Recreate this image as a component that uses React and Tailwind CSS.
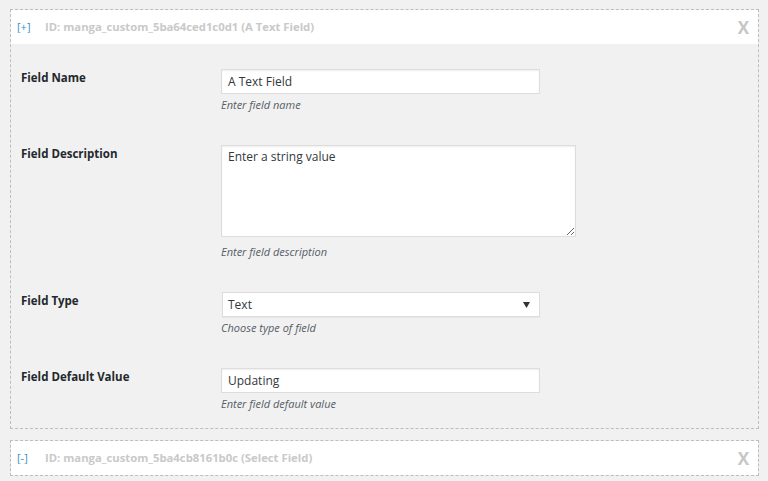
const fields = [
  { label: 'Field Name', value: 'A Text Field', hint: 'Enter field name', kind: 'input' },
  { label: 'Field Description', value: 'Enter a string value', hint: 'Enter field description', kind: 'textarea' },
  { label: 'Field Type', value: 'Text', hint: 'Choose type of field', kind: 'select' },
  { label: 'Field Default Value', value: 'Updating', hint: 'Enter field default value', kind: 'input' },
]

function Header({ toggle, title }) {
  return (
    <div className="flex items-center h-[34px] bg-white pl-[6px] pr-[9px]">
      <span className="text-[#3b8ec2] text-[11px] w-[28px]">{toggle}</span>
      <span className="text-[#c9c9c9] text-[11.3px] font-bold">{title}</span>
      <span className="ml-auto text-[#c6c6c6] text-[17px] font-bold leading-none">X</span>
    </div>
  )
}

function Control({ f }) {
  if (f.kind === 'textarea') {
    return (
      <textarea
        readOnly
        defaultValue={f.value}
        className="block w-[355px] h-[92px] bg-white border border-[#dddddd] shadow-[inset_0_1px_2px_rgba(0,0,0,0.07)] px-[6px] py-[2px] text-[12px] text-[#32373c] leading-[18px] outline-none"
      />
    )
  }
  if (f.kind === 'select') {
    return (
      <div className="flex items-center w-[318px] h-[25px] ml-[1px] bg-white border border-[#dddddd] shadow-[0_1px_1px_rgba(0,0,0,0.04)] pl-[5px] pr-[9px] text-[12px] text-[#32373c]">
        <span>{f.value}</span>
        <svg className="ml-auto" width="7" height="6" viewBox="0 0 7 6">
          <path d="M0 0h7L3.5 6z" fill="#333" />
        </svg>
      </div>
    )
  }
  return (
    <div className="flex items-center w-[319px] h-[25px] bg-white border border-[#dddddd] shadow-[inset_0_1px_2px_rgba(0,0,0,0.07)] px-[6px] text-[12px] text-[#32373c]">
      {f.value}
    </div>
  )
}

export default function App() {
  return (
    <div className="min-h-screen bg-[#f1f1f1] pt-[9px] px-[10px] font-['Open_Sans',sans-serif] text-[#23282d]">
      <div className="w-[749px] border border-dashed border-[#bdbdbd]">
        <Header toggle="[+]" title="ID: manga_custom_5ba64ced1c0d1 (A Text Field)" />
        <div className="flex flex-col gap-[32px] pt-[25px] pb-[16px] pl-[10px]">
          {fields.map((f) => (
            <div key={f.label} className="flex">
              <div className="w-[200px] text-[11.5px] font-bold leading-[17px]">{f.label}</div>
              <div className="flex flex-col">
                <Control f={f} />
                <div className={`${f.kind === 'textarea' ? 'mt-[7px]' : 'mt-[3px]'} text-[11px] italic text-[#555d66] leading-[16px]`}>
                  {f.hint}
                </div>
              </div>
            </div>
          ))}
        </div>
      </div>
      <div className="w-[749px] mt-[11px] border border-dashed border-[#bdbdbd]">
        <Header toggle="[-]" title="ID: manga_custom_5ba4cb8161b0c (Select Field)" />
      </div>
    </div>
  )
}
